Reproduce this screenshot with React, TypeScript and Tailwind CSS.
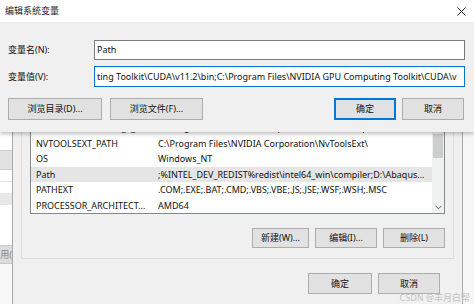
import React from "react";

const cjk = '"Noto Sans", "Noto Sans CJK SC", sans-serif';

function Btn({ label, w, primary, h = "h-[22px]" }: { label: string; w: string; primary?: boolean; h?: string }) {
  return (
    <div
      className={`${w} ${h} shrink-0 flex items-center justify-center text-[9px] text-[#111] bg-[#e1e1e1] ${
        primary ? "border-2 border-[#0078d7]" : "border border-[#adadad]"
      }`}
    >
      {label}
    </div>
  );
}

const rows: [string, string][] = [
  ["NVCUDASAMPLES11_2_ROOT", "C:\\ProgramData\\NVIDIA Corporation\\CUDA Samples\\v11.2"],
  ["NVTOOLSEXT_PATH", "C:\\Program Files\\NVIDIA Corporation\\NvToolsExt\\"],
  ["OS", "Windows_NT"],
  ["Path", ";%INTEL_DEV_REDIST%redist\\intel64_win\\compiler;D:\\Abaqus..."],
  ["PATHEXT", ".COM;.EXE;.BAT;.CMD;.VBS;.VBE;.JS;.JSE;.WSF;.WSH;.MSC"],
  ["PROCESSOR_ARCHITECT...", "AMD64"],
];

export default function App() {
  return (
    <div
      className="relative w-[474px] h-[304px] overflow-hidden bg-[#f7f7f7]"
      style={{ fontFamily: cjk }}
    >
      {/* far-left window behind */}
      <div className="absolute left-0 top-0 w-[12px] h-[304px] bg-white flex flex-col">
        <div className="h-[150px]" />
        <div className="h-[20px] bg-[#e1e1e1] border-y border-[#cfcfcf]" />
        <div className="h-[12px] border-b border-[#e3e3e3]" />
        <div className="h-[11px]" />
        <div className="h-[12px] bg-[#e8e8e8]" />
        <div className="h-[40px]" />
        <div className="h-[19px] bg-[#dcdcdc] border-y border-[#c8c8c8] flex items-center justify-end overflow-hidden">
          <span className="text-[9px] text-[#888] leading-none">用(</span>
        </div>
        <div className="flex-1 bg-[#f8f8f8]" />
      </div>

      {/* environment variables window behind */}
      <div className="absolute left-[12px] top-0 w-[451px] h-[304px] bg-[#f0f0f0] border-l border-r border-[#a9a9a9] flex flex-col px-[8px]">
        <div className="mt-[100px] h-[159px] shrink-0 border border-[#dcdcdc] flex flex-col px-[8px]">
          <div className="mt-[19px] h-[94px] shrink-0 bg-white border border-[#828790] flex overflow-hidden">
            <div className="flex-1 flex flex-col justify-end overflow-hidden">
              {rows.map(([n, v]) => (
                <div
                  key={n}
                  className={`h-[15.5px] shrink-0 flex items-center text-[9px] text-[#111] whitespace-nowrap overflow-hidden ${
                    n === "Path" ? "bg-[#e5e5e5]" : ""
                  }`}
                >
                  <span className="w-[127px] pl-[5px] shrink-0">{n}</span>
                  <span>{v}</span>
                </div>
              ))}
            </div>
            <div className="w-[12px] bg-[#f0f0f0] flex flex-col justify-end items-center">
              <div className="w-[10px] h-[24px] bg-[#cdcdcd]" />
              <div className="h-[43px]" />
              <div className="h-[12px] flex items-center justify-center">
                <svg width="7" height="5" viewBox="0 0 7 5">
                  <path d="M0.5 0.8 L3.5 3.8 L6.5 0.8" fill="none" stroke="#606060" strokeWidth="1" />
                </svg>
              </div>
            </div>
          </div>
          <div className="mt-[14px] flex justify-end gap-[6px]">
            <Btn label="新建(W)..." w="w-[57px]" h="h-[20px]" />
            <Btn label="编辑(I)..." w="w-[62px]" h="h-[20px]" />
            <Btn label="删除(L)" w="w-[62px]" h="h-[20px]" />
          </div>
        </div>
        <div className="mt-[14px] flex justify-end gap-[6px] pr-[14px]">
          <Btn label="确定" w="w-[64px]" h="h-[21px]" />
          <Btn label="取消" w="w-[62px]" h="h-[21px]" />
        </div>
      </div>

      {/* watermark */}
      <div className="absolute right-[4px] bottom-[2px] text-[9px] text-[#c4c4c4] leading-none">
        CSDN @羊月白帮
      </div>

      {/* top dialog */}
      <div className="absolute left-0 top-0 w-[474px] h-[132px] bg-[#f0f0f0] flex flex-col shadow-[0_2px_4px_rgba(0,0,0,0.25)]">
        <div className="h-[22px] bg-white flex items-center justify-between pl-[5px] pr-[8px]">
          <span className="text-[9px] text-[#222]">编辑系统变量</span>
          <svg width="9" height="9" viewBox="0 0 9 9">
            <path d="M0.5 0.5 L8.5 8.5 M8.5 0.5 L0.5 8.5" stroke="#222" strokeWidth="1" />
          </svg>
        </div>
        <div className="flex flex-col pl-[8px] pr-[9px] pt-[18px]">
          <div className="flex items-center h-[20px]">
            <span className="w-[86px] text-[9px] text-[#111]">变量名(N):</span>
            <div className="flex-1 h-[20px] bg-white border border-[#7a7a7a] flex items-center px-[2px] text-[9px] text-[#111]">
              Path
            </div>
          </div>
          <div className="flex items-center h-[21px] mt-[6px]">
            <span className="w-[86px] text-[9px] text-[#111]">变量值(V):</span>
            <div className="flex-1 h-[21px] bg-white border border-[#0078d7] flex items-center px-[2px] text-[9px] text-[#111] whitespace-nowrap overflow-hidden">
              ting Toolkit\CUDA\v11.2\bin;C:\Program Files\NVIDIA GPU Computing Toolkit\CUDA\v
            </div>
          </div>
          <div className="flex items-center mt-[11px] gap-[8px]">
            <Btn label="浏览目录(D)..." w="w-[94px]" />
            <Btn label="浏览文件(F)..." w="w-[93px]" />
            <div className="flex-1" />
            <div className="flex gap-[6px] mr-[1px]">
              <Btn label="确定" w="w-[62px]" primary />
              <Btn label="取消" w="w-[62px]" />
            </div>
          </div>
        </div>
      </div>
    </div>
  );
}
